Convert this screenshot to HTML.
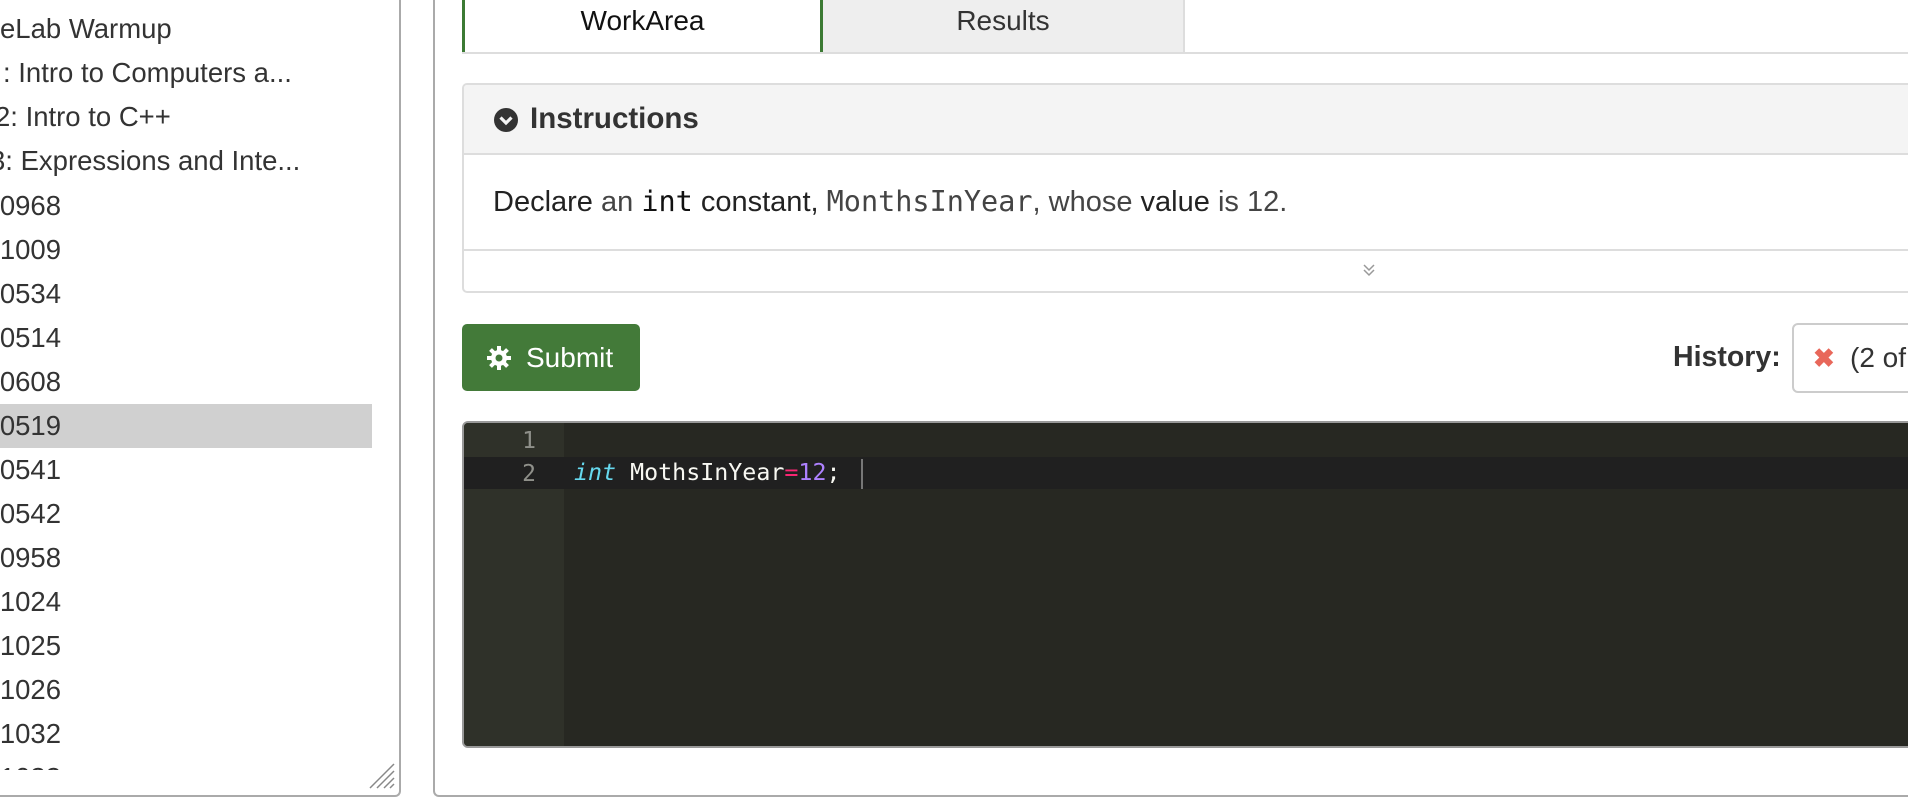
<!DOCTYPE html>
<html><head><style>
*{margin:0;padding:0;box-sizing:border-box}
body{width:1908px;height:800px;overflow:hidden;background:#fff;font-family:"Liberation Sans",Arial,sans-serif;color:#333;position:relative}
.lp{position:absolute;left:0;top:0;width:401px;height:797px;border-right:2px solid #aaa;border-bottom:2px solid #aaa;border-bottom-right-radius:6px;overflow:hidden}
.it{position:absolute;height:44px;line-height:44px;font-size:27.5px;white-space:nowrap;color:#333;text-align:right}
.il{position:absolute;height:44px;line-height:44px;font-size:27.5px;white-space:nowrap;color:#333}
.hl{position:absolute;left:0;top:404px;width:372px;height:44px;background:#d0d0d0}
.rp{position:absolute;left:433px;top:-10px;width:1500px;height:807px;border-left:2px solid #aaa;border-bottom:2px solid #aaa;border-bottom-left-radius:6px}
.tab{position:absolute;top:0;height:52px;font-size:28px;text-align:center;line-height:42px}
.line{position:absolute;left:462px;right:0;top:52px;height:2px;background:#ddd}
.inst{position:absolute;left:462px;top:83px;width:1500px;height:210px;border:2px solid #ddd;border-radius:5px;overflow:hidden}
.ih{height:70px;background:#f4f4f4;border-bottom:2px solid #ddd;font-weight:bold;font-size:29.5px;line-height:68px;padding-left:30px;color:#333}
.ib{height:96px;border-bottom:2px solid #ddd;font-size:29px;line-height:94px;padding-left:29px;color:#222}
.mono{font-family:"DejaVu Sans Mono",monospace;font-size:28.5px}
.btn{position:absolute;left:462px;top:324px;width:178px;height:67px;background:#437a39;border-radius:5px;color:#fff;font-size:28px;line-height:67px;padding-left:64px}
.ed{position:absolute;left:462px;top:421px;width:1500px;height:327px;background:#272822;border:2px solid #999;border-radius:6px;overflow:hidden}
.gut{position:absolute;left:0;top:0;width:100px;height:100%;background:#2f3129}
.act{position:absolute;left:0;top:34px;width:100%;height:32px;background:#202020}
.ln{position:absolute;width:72px;text-align:right;color:#8f908a;font-size:23px;font-family:"DejaVu Sans Mono",monospace}
.code{position:absolute;left:110px;top:33px;font-size:23.3px;line-height:33px;color:#f8f8f2;font-family:"DejaVu Sans Mono",monospace;white-space:pre}
</style></head><body>
<div class="lp">
<div class="hl"></div>
<div class="il" style="top:7px;left:0">eLab Warmup</div>
<div class="il" style="top:51px;left:3px">: Intro to Computers a...</div>
<div class="il" style="top:95px;left:-5px">2: Intro to C++</div>
<div class="il" style="top:139px;left:-10px">3: Expressions and Inte...</div>
<div class="it" style="top:184px;right:338px">0968</div>
<div class="it" style="top:228px;right:338px">1009</div>
<div class="it" style="top:272px;right:338px">0534</div>
<div class="it" style="top:316px;right:338px">0514</div>
<div class="it" style="top:360px;right:338px">0608</div>
<div class="it" style="top:404px;right:338px">0519</div>
<div class="it" style="top:448px;right:338px">0541</div>
<div class="it" style="top:492px;right:338px">0542</div>
<div class="it" style="top:536px;right:338px">0958</div>
<div class="it" style="top:580px;right:338px">1024</div>
<div class="it" style="top:624px;right:338px">1025</div>
<div class="it" style="top:668px;right:338px">1026</div>
<div class="it" style="top:712px;right:338px">1032</div>
<div style="position:absolute;left:0;top:756px;width:70px;height:14px;overflow:hidden"><div class="it" style="top:0;right:9px">1033</div></div>
<svg style="position:absolute;left:368px;top:762px" width="28" height="28"><path d="M26 2L2 26M26 9L9 26M26 16L16 26M26 22L22 26" stroke="#888" stroke-width="1.5"/></svg>
</div>
<div class="rp"></div>
<div class="tab" style="left:462px;width:361px;border-left:3px solid #3c7a34;border-right:3px solid #3c7a34;color:#111">WorkArea</div>
<div class="tab" style="left:823px;width:362px;background:#eee;border-right:2px solid #ddd;color:#333">Results</div>
<div class="line"></div>
<div class="inst">
<div class="ih"><svg width="24" height="24" viewBox="0 0 24 24" style="vertical-align:-4px;margin-right:12px"><circle cx="12" cy="12" r="12" fill="#333"/><path d="M6.5 9.5L12 15L17.5 9.5" stroke="#f4f4f4" stroke-width="3.2" fill="none"/></svg>Instructions</div>
<div class="ib">Declare <span style="color:#444">an</span> <span class="mono" style="color:#111">int</span> constant, <span class="mono" style="color:#444">MonthsInYear</span><span style="color:#444">, whose</span> value <span style="color:#444">is 12.</span></div>
<div style="position:absolute;left:897px;top:177px"><svg width="16" height="16" viewBox="0 0 16 16"><path d="M3 3L8 8L13 3M3 8L8 13L13 8" stroke="#999" stroke-width="1.5" fill="none"/></svg></div>
</div>
<div class="btn"><svg width="24" height="24" viewBox="0 0 24 24" style="position:absolute;left:25px;top:22px"><g fill="#fff"><circle cx="12" cy="12" r="8"/><rect x="10" y="0" width="4" height="24"/><rect x="0" y="10" width="24" height="4"/><rect x="10" y="0" width="4" height="24" transform="rotate(45 12 12)"/><rect x="10" y="0" width="4" height="24" transform="rotate(-45 12 12)"/></g><circle cx="12" cy="12" r="3.5" fill="#437a39"/></svg>Submit</div>
<div style="position:absolute;left:1673px;top:341px;font-weight:bold;font-size:28.5px;color:#333">History:</div>
<div style="position:absolute;left:1792px;top:323px;width:200px;height:70px;border:2px solid #ccc;border-radius:6px;font-size:28px;line-height:66px;padding-left:56px;color:#333">(2 of 2)</div>
<div style="position:absolute;left:1813px;top:343px;color:#e8675a;font-size:26px;font-weight:bold;line-height:30px">✖</div>
<div class="ed">
<div class="gut"></div>
<div class="act"></div>
<div class="ln" style="top:2px;line-height:33px">1</div>
<div class="ln" style="top:35px;line-height:33px">2</div>
<div class="code"><i style="color:#66d9ef">int</i> MothsInYear<span style="color:#f92672">=</span><span style="color:#ae81ff">12</span>;</div>
<div style="position:absolute;left:397px;top:36px;width:2px;height:30px;background:#777"></div>
</div>
</body></html>
